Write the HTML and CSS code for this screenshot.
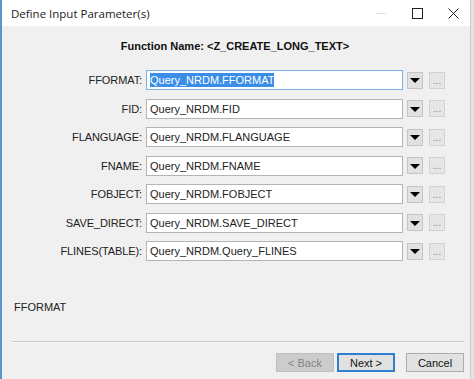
FILE: index.html
```html
<!DOCTYPE html>
<html lang="en">
  <head>
    <meta charset="UTF-8" />
    <title>Define Input Parameter(s)</title>
    <link rel="stylesheet" href="styles.css">
  </head>
  <body>
    <div class="window">
      <div class="title-bar">
        <span class="title">Define Input Parameter(s)</span>
        <div class="controls">
          <span class="ctl ctl-min"></span>
          <span class="ctl ctl-max"><span class="box"></span></span>
          <span class="ctl ctl-close">
            <svg width="11" height="11" viewBox="0 0 11 11"><path d="M0.5 0.5 L10.5 10.5 M10.5 0.5 L0.5 10.5" stroke="#222" stroke-width="1"/></svg>
          </span>
        </div>
      </div>

      <div class="content">
        <h2 class="func-name">Function Name: &lt;Z_CREATE_LONG_TEXT&gt;</h2>

        <div class="params">
          <label>FFORMAT:</label>
          <div class="field focused"><span class="sel">Query_NRDM.FFORMAT</span></div>
          <span class="drop"><span class="tri"></span></span>
          <span class="more">...</span>

          <label>FID:</label>
          <div class="field">Query_NRDM.FID</div>
          <span class="drop"><span class="tri"></span></span>
          <span class="more">...</span>

          <label>FLANGUAGE:</label>
          <div class="field">Query_NRDM.FLANGUAGE</div>
          <span class="drop"><span class="tri"></span></span>
          <span class="more">...</span>

          <label>FNAME:</label>
          <div class="field">Query_NRDM.FNAME</div>
          <span class="drop"><span class="tri"></span></span>
          <span class="more">...</span>

          <label>FOBJECT:</label>
          <div class="field">Query_NRDM.FOBJECT</div>
          <span class="drop"><span class="tri"></span></span>
          <span class="more">...</span>

          <label>SAVE_DIRECT:</label>
          <div class="field">Query_NRDM.SAVE_DIRECT</div>
          <span class="drop"><span class="tri"></span></span>
          <span class="more">...</span>

          <label>FLINES(TABLE):</label>
          <div class="field">Query_NRDM.Query_FLINES</div>
          <span class="drop"><span class="tri"></span></span>
          <span class="more">...</span>
        </div>

        <div class="desc">FFORMAT</div>

        <div class="separator"></div>

        <div class="buttons">
          <button class="btn disabled">&lt; Back</button>
          <button class="btn default">Next &gt;</button>
          <button class="btn cancel">Cancel</button>
        </div>
      </div>
    </div>
  </body>
</html>
```

FILE: styles.css
```css
/* Reset */
* {
  margin: 0;
  padding: 0;
  box-sizing: border-box;
}

body {
  width: 474px;
  height: 379px;
  overflow: hidden;
  background: #e4e4e4;
  font-family: "Liberation Sans", Arial, sans-serif;
  color: #1a1a1a;
}

/* Dialog window */
.window {
  width: 471px;
  height: 379px;
  border-left: 2px solid #5c93cf;
  border-right: 1px solid #c8c8c8;
  background: #f0f0f0;
  display: flex;
  flex-direction: column;
}

.title-bar {
  height: 26px;
  background: #ffffff;
  display: flex;
  align-items: center;
  justify-content: space-between;
  padding-left: 9px;
}

.title {
  font-family: "Open Sans", "Liberation Sans", sans-serif;
  font-size: 11.5px;
  color: #222;
}

.controls {
  display: flex;
  height: 100%;
}

.ctl {
  width: 37px;
  height: 100%;
  display: flex;
  align-items: center;
  justify-content: center;
}

.ctl-min::before {
  content: "";
  width: 10px;
  height: 1px;
  background: #e0e0e0;
}

.ctl-max .box {
  width: 11px;
  height: 11px;
  border: 1px solid #222;
}

.ctl-close {
  width: 34px;
}

/* Content */
.content {
  flex: 1;
  display: flex;
  flex-direction: column;
}

.func-name {
  margin-top: 13px;
  text-align: center;
  font-size: 11px;
  font-weight: bold;
  line-height: 14px;
  color: #111;
  padding-right: 2px;
}

.params {
  margin-top: 17px;
  display: grid;
  grid-template-columns: 140px 257px 16px 16px;
  column-gap: 4px;
  row-gap: 8.5px;
  align-items: center;
}

.params label {
  text-align: right;
  font-size: 11px;
  color: #222;
  letter-spacing: -0.1px;
}

.field {
  height: 20px;
  background: #fff;
  border: 1px solid #b4b4b4;
  font-size: 11px;
  line-height: 18px;
  padding-left: 3px;
  color: #222;
  white-space: nowrap;
  overflow: hidden;
}

.field.focused {
  border-color: #7aaee0;
}

.sel {
  background: #3b8ee8;
  color: #fff;
  padding: 1px 0;
}

.drop {
  width: 16px;
  height: 17px;
  background: #e1e1e1;
  border: 1px solid #c4c4c4;
  display: flex;
  align-items: center;
  justify-content: center;
}

.tri {
  width: 0;
  height: 0;
  border-left: 5px solid transparent;
  border-right: 5px solid transparent;
  border-top: 5px solid #000;
  margin-top: 1px;
}

.more {
  width: 16px;
  height: 17px;
  margin-left: 2px;
  background: #e6e6e6;
  border: 1px solid #d2d2d2;
  font-size: 10px;
  line-height: 15px;
  text-align: center;
  color: #8a8a8a;
}

.desc {
  margin-top: 40px;
  padding-left: 12px;
  font-size: 11px;
  color: #222;
}

.separator {
  margin: 28px 6px 0 10px;
  height: 2px;
  border-top: 1px solid #c8c8c8;
  border-bottom: 1px solid #fbfbfb;
}

.buttons {
  display: flex;
  justify-content: flex-end;
  padding-right: 6px;
  margin-top: 10px;
}

.btn {
  width: 58px;
  height: 19px;
  font-family: "Liberation Sans", Arial, sans-serif;
  font-size: 11px;
  background: #e1e1e1;
  border: 1px solid #adadad;
  color: #111;
  margin-left: 3px;
}

.btn.disabled {
  background: #cccccc;
  border-color: #bfbfbf;
  color: #838383;
}

.btn.default {
  border: 2px solid #2f7fd0;
}

.btn.cancel {
  margin-left: 11px;
}
```
